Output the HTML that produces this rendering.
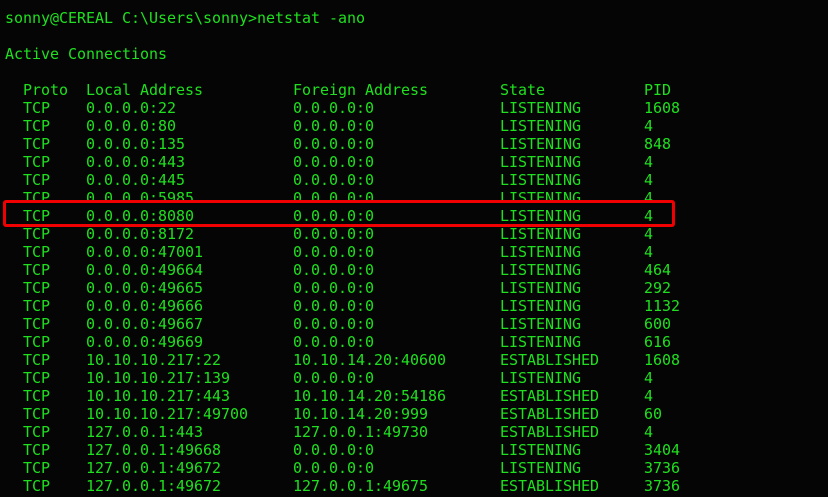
<!DOCTYPE html>
<html><head><meta charset="utf-8"><style>
html,body{margin:0;padding:0;background:#050505;width:828px;height:497px;overflow:hidden;}
pre{margin:0;position:absolute;left:5px;top:9px;font-family:"DejaVu Sans Mono","Liberation Mono",monospace;font-size:15px;line-height:18px;color:#1fe01f;letter-spacing:-0.03px;}
.box{position:absolute;left:3px;top:200px;width:666px;height:21px;border:3px solid #f00000;border-radius:3px;}
</style></head><body>
<pre>sonny@CEREAL C:\Users\sonny&gt;netstat -ano

Active Connections

  Proto  Local Address          Foreign Address        State           PID
  TCP    0.0.0.0:22             0.0.0.0:0              LISTENING       1608
  TCP    0.0.0.0:80             0.0.0.0:0              LISTENING       4
  TCP    0.0.0.0:135            0.0.0.0:0              LISTENING       848
  TCP    0.0.0.0:443            0.0.0.0:0              LISTENING       4
  TCP    0.0.0.0:445            0.0.0.0:0              LISTENING       4
  TCP    0.0.0.0:5985           0.0.0.0:0              LISTENING       4
  TCP    0.0.0.0:8080           0.0.0.0:0              LISTENING       4
  TCP    0.0.0.0:8172           0.0.0.0:0              LISTENING       4
  TCP    0.0.0.0:47001          0.0.0.0:0              LISTENING       4
  TCP    0.0.0.0:49664          0.0.0.0:0              LISTENING       464
  TCP    0.0.0.0:49665          0.0.0.0:0              LISTENING       292
  TCP    0.0.0.0:49666          0.0.0.0:0              LISTENING       1132
  TCP    0.0.0.0:49667          0.0.0.0:0              LISTENING       600
  TCP    0.0.0.0:49669          0.0.0.0:0              LISTENING       616
  TCP    10.10.10.217:22        10.10.14.20:40600      ESTABLISHED     1608
  TCP    10.10.10.217:139       0.0.0.0:0              LISTENING       4
  TCP    10.10.10.217:443       10.10.14.20:54186      ESTABLISHED     4
  TCP    10.10.10.217:49700     10.10.14.20:999        ESTABLISHED     60
  TCP    127.0.0.1:443          127.0.0.1:49730        ESTABLISHED     4
  TCP    127.0.0.1:49668        0.0.0.0:0              LISTENING       3404
  TCP    127.0.0.1:49672        0.0.0.0:0              LISTENING       3736
  TCP    127.0.0.1:49672        127.0.0.1:49675        ESTABLISHED     3736</pre>
<div class="box"></div>
</body></html>
